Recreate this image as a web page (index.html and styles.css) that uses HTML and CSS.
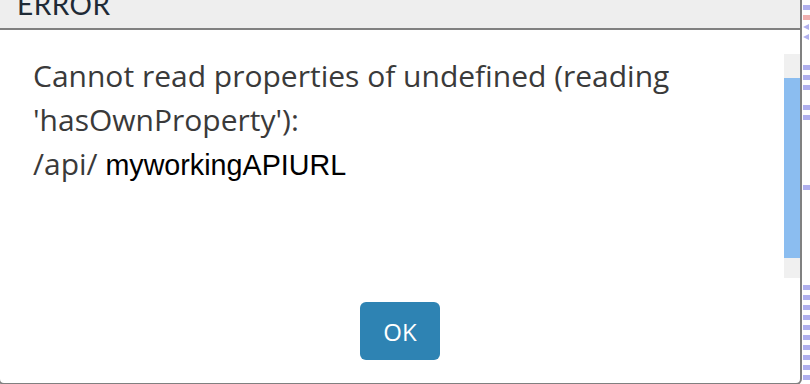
FILE: index.html
```html
<!DOCTYPE html>
<html>
<head>
<meta charset="utf-8">
<link rel="stylesheet" href="styles.css">
</head>
<body>
<div class="page">
  <div class="dialog">
    <div class="header"><span class="title">ERROR</span></div>
    <div class="body">
      <div class="message">
        <div class="line">Cannot read properties of undefined (reading</div>
        <div class="line">'hasOwnProperty'):</div>
        <div class="line">/api/ <span class="url">myworkingAPIURL</span></div>
        <div class="line"><span class="peek">i</span></div>
      </div>
      <div class="scrollbar"><div class="thumb"></div></div>
    </div>
    <div class="footer"><button class="ok">OK</button></div>
  </div>
  <div class="strip">
    <div class="slot"><div class="mark"></div></div>
    <div class="slot"><div class="mark pink"></div></div>
    <div class="slot"><div class="tri"></div></div>
    <div class="slot"><div class="tri"></div></div>
    <div class="slot"></div>
    <div class="slot"></div>
    <div class="slot"><div class="mark"></div></div>
    <div class="slot"><div class="mark"></div></div>
    <div class="slot"><div class="mark"></div></div>
    <div class="slot"></div>
    <div class="slot"><div class="mark"></div></div>
    <div class="slot"><div class="mark"></div></div>
    <div class="slot"></div>
    <div class="slot"></div>
    <div class="slot"></div>
    <div class="slot"></div>
    <div class="slot"></div>
    <div class="slot"></div>
    <div class="slot"><div class="mark"></div></div>
    <div class="slot"></div>
    <div class="slot"></div>
    <div class="slot"></div>
    <div class="slot"></div>
    <div class="slot"></div>
    <div class="slot"></div>
    <div class="slot"></div>
    <div class="slot"></div>
    <div class="slot"></div>
    <div class="slot"><div class="mark"></div></div>
    <div class="slot"><div class="mark"></div></div>
    <div class="slot"><div class="mark"></div></div>
    <div class="slot"><div class="mark"></div></div>
    <div class="slot"><div class="mark"></div></div>
    <div class="slot"><div class="mark"></div></div>
    <div class="slot"><div class="mark"></div></div>
    <div class="slot"><div class="mark"></div></div>
    <div class="slot"><div class="mark"></div></div>
    <div class="slot"><div class="mark"></div></div>
  </div>
</div>
</body>
</html>
```

FILE: styles.css
```css
html, body {
  margin: 0;
  padding: 0;
  background: #ffffff;
  overflow: hidden;
  width: 810px;
  height: 384px;
}

.page {
  display: flex;
  align-items: flex-start;
  width: 810px;
  height: 384px;
  overflow: hidden;
}

.dialog {
  flex: 0 0 auto;
  width: 800px;
  margin-left: -2px;
  margin-top: -20px;
  border: 2px solid #808080;
  border-radius: 6px;
  background: #ffffff;
  display: flex;
  flex-direction: column;
}

.header {
  height: 46px;
  background: #eeeeee;
  border-bottom: 2px solid #808080;
  display: flex;
  align-items: flex-end;
  padding-left: 17px;
  border-radius: 4px 4px 0 0;
}

.title {
  font-family: Lato, "Open Sans", sans-serif;
  font-size: 28px;
  color: #1e2a36;
  line-height: 1;
  padding-bottom: 10px;
  letter-spacing: 0.5px;
}

.body {
  display: flex;
  padding-top: 24px;
  height: 224px;
}

.message {
  flex: 1 1 auto;
  padding-left: 33px;
  height: 145px;
  overflow: hidden;
  font-family: "Open Sans", sans-serif;
  font-size: 30px;
  line-height: 44px;
  color: #3a3a3a;
  white-space: nowrap;
}

.url {
  font-family: "Liberation Sans", Arial, sans-serif;
  color: #000000;
  font-size: 28.7px;
}

.peek {
  padding-left: 13px;
}

.scrollbar {
  flex: 0 0 16px;
  width: 16px;
  height: 224px;
  background: #f0f0f0;
  padding: 24px 0 20px;
  box-sizing: border-box;
}

.thumb {
  height: 100%;
  background: #8bbdf0;
}

.footer {
  display: flex;
  justify-content: center;
  padding: 24px 0 23px;
}

.ok {
  width: 80px;
  height: 58px;
  border: none;
  border-radius: 6px;
  background: #2e83b3;
  color: #ffffff;
  font-family: "Open Sans", sans-serif;
  font-size: 24px;
  padding: 0;
}

.strip {
  flex: 0 0 8px;
  width: 8px;
  display: flex;
  flex-direction: column;
}

.slot {
  height: 10px;
  display: flex;
  align-items: flex-end;
  justify-content: flex-end;
}

.mark {
  width: 7px;
  height: 5px;
  background: #b0b0ee;
}

.mark.pink {
  background: #f0b0b0;
}

.tri {
  width: 0;
  height: 0;
  border-top: 3px solid transparent;
  border-bottom: 3px solid transparent;
  border-right: 6px solid #b0b0ee;
  margin-right: 1px;
}
```
